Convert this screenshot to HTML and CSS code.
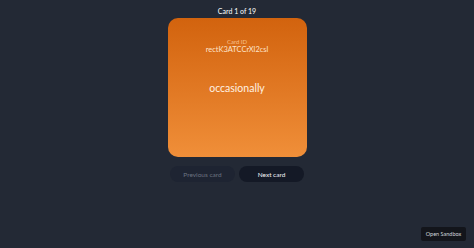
FILE: index.html
```html
<!DOCTYPE html>
<html>
<head>
<meta charset="utf-8">
<link rel="stylesheet" href="styles.css">
</head>
<body>
<div class="app">
  <div class="counter">Card 1 of 19</div>
  <div class="card">
    <div class="card-label">Card ID</div>
    <div class="card-id">rectK3ATCCrXl2csl</div>
    <div class="card-word">occasionally</div>
  </div>
  <div class="nav">
    <button class="btn btn-prev">Previous card</button>
    <button class="btn btn-next">Next card</button>
  </div>
</div>
<button class="sandbox">Open Sandbox</button>
</body>
</html>
```
FILE: styles.css
```css
html, body {
  margin: 0;
  padding: 0;
  background: #232935;
  width: 474px;
  height: 248px;
  overflow: hidden;
  font-family: Lato, "Noto Sans", sans-serif;
}
.app {
  display: flex;
  flex-direction: column;
  align-items: center;
  padding-top: 6px;
}
.counter {
  color: #ffffff;
  font-size: 7px;
  line-height: 11px;
  height: 12px;
}
.card {
  width: 139px;
  height: 139px;
  border-radius: 10px;
  background: linear-gradient(to bottom, #d2630e 0%, #e27a25 55%, #f08f39 100%);
  display: flex;
  flex-direction: column;
  align-items: center;
  box-sizing: border-box;
  padding-top: 20px;
}
.card-label {
  color: #f7c08e;
  font-size: 6px;
  line-height: 7px;
}
.card-id {
  color: #fde4cc;
  font-size: 7.5px;
  line-height: 9px;
}
.card-word {
  color: #fff1e2;
  font-size: 10.5px;
  line-height: 13px;
  margin-top: 28px;
}
.nav {
  display: flex;
  gap: 4px;
  margin-top: 9px;
}
.btn {
  width: 65px;
  height: 16px;
  border: none;
  border-radius: 8px;
  font-family: Lato, "Noto Sans", sans-serif;
  font-size: 6.5px;
  padding: 0;
}
.btn-prev {
  background: #1e2432;
  color: #6b7280;
}
.btn-next {
  background: #141926;
  color: #f3f4f6;
}
.sandbox {
  position: absolute;
  right: 8px;
  bottom: 7px;
  width: 45px;
  height: 14px;
  border: none;
  border-radius: 2px;
  background: #13151b;
  color: #d1d5db;
  font-family: Lato, "Noto Sans", sans-serif;
  font-size: 5.5px;
  padding: 0;
}
```
